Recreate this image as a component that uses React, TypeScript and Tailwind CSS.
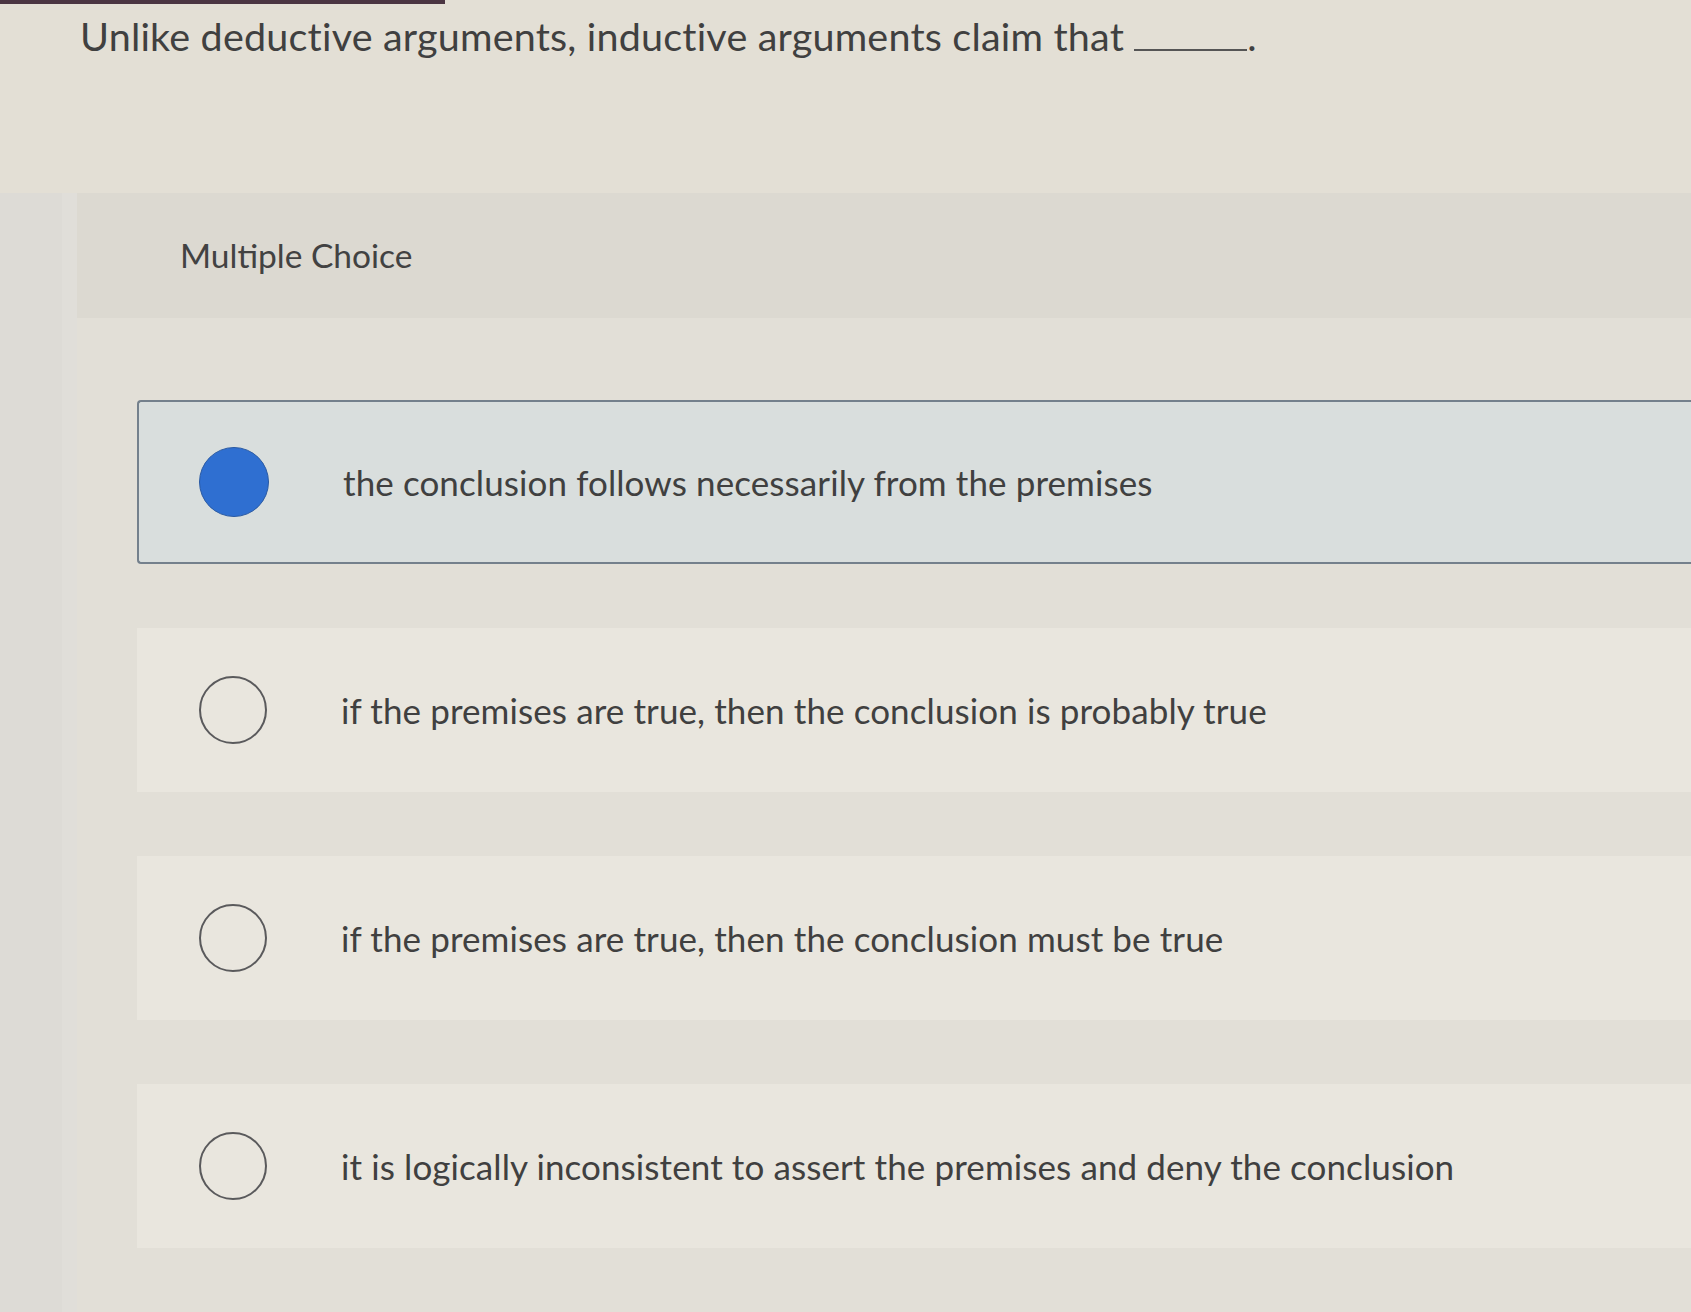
const options = [
  'the conclusion follows necessarily from the premises',
  'if the premises are true, then the conclusion is probably true',
  'if the premises are true, then the conclusion must be true',
  'it is logically inconsistent to assert the premises and deny the conclusion',
];

function Radio({ checked }: { checked: boolean }) {
  if (checked) {
    return <div className="w-[70px] h-[70px] shrink-0 rounded-full bg-[#2f6fd1] border border-[#2a5aa3]" />;
  }
  return <div className="w-[68px] h-[68px] shrink-0 rounded-full border-[2.5px] border-[#5a5a5c]" />;
}

export default function App() {
  const selected = 0;

  return (
    <div
      className="relative w-[1691px] h-[1312px] overflow-hidden bg-[#e3dfd5] text-[#404040]"
      style={{ fontFamily: 'Lato, "Open Sans", sans-serif' }}
    >
      {/* top edge of the toolbar */}
      <div className="w-[445px] h-[4px] bg-[#4b3542]" />

      <div className="flex flex-col">
        {/* Question */}
        <div className="h-[189px] pl-[80px] pt-[8px]">
          <h1 className="text-[39.5px] leading-[48px] tracking-[0.2px] font-normal">
            Unlike deductive arguments, inductive arguments claim that{' '}
            <span className="inline-block w-[113px] border-b-2 border-[#555] align-baseline" />.
          </h1>
        </div>

        <div className="flex">
          {/* screen edge */}
          <div className="w-[62px] shrink-0 bg-[#dddbd6]" />
          <div className="w-[15px] shrink-0 bg-[#e0ded9]" />

          {/* Panel */}
          <div className="flex-1 flex flex-col bg-[#e2dfd7] min-h-[1120px]">
            <div className="h-[125px] bg-[#dcd9d1] flex items-center pl-[103px]">
              <span className="text-[33.5px] text-[#424242]">Multiple Choice</span>
            </div>

            <div className="flex flex-col gap-[64px] pt-[82px] pl-[60px]">
              {options.map((text, i) => (
                <div
                  key={text}
                  className={
                    i === selected
                      ? 'h-[164px] flex items-center pl-[60px] bg-[#d9dedd] border-2 border-r-0 border-[#74808c] rounded-l-[4px]'
                      : 'h-[164px] flex items-center pl-[62px] bg-[#e9e6de]'
                  }
                >
                  <Radio checked={i === selected} />
                  <span className="ml-[74px] text-[35px] text-[#404040] tracking-[0.1px]">{text}</span>
                </div>
              ))}
            </div>
          </div>
        </div>
      </div>
    </div>
  );
}
